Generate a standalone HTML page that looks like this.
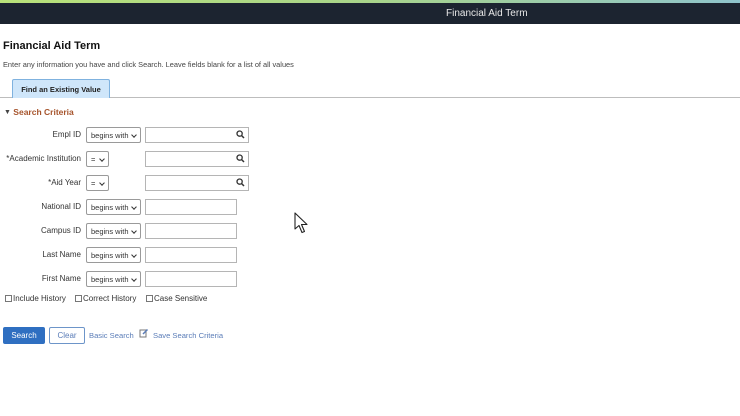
<!DOCTYPE html>
<html><head><meta charset="utf-8"><style>
*{margin:0;padding:0;box-sizing:border-box}
body{width:740px;height:416px;background:#fff;font-family:"Liberation Sans",Arial,sans-serif;position:relative;overflow:hidden;color:#333}
.a{position:absolute;white-space:nowrap}
.hdr{left:0;top:0;width:740px;height:24px;background:#1c2430}
.gl{left:0;top:0;width:740px;height:3px;background:linear-gradient(90deg,#b9e27a,#a8d48a 50%,#8fc4cc)}
.lbl{font-size:8px;color:#333;text-align:right;width:81px;left:0}
.sel{height:16px;border:1px solid #9a9a9a;border-radius:2px;font-size:7.5px;color:#333;padding:3px 0 0 4px;background:#fff}
.sel:after{content:"";position:absolute;right:4px;top:5px;width:3px;height:3px;border-right:1.3px solid #333;border-bottom:1.3px solid #333;transform:rotate(45deg)}
.inp{height:16px;border:1px solid #b5b5b5;background:#fff}
.mg{position:absolute;right:3px;top:2px}
.cb{font-size:8px;color:#333}
.cb i{display:inline-block;width:7px;height:7px;border:1px solid #777;margin-right:1px;vertical-align:-1px}
.lnk{font-size:7.6px;color:#5b7db8}
</style></head><body>
<div class="a hdr"></div><div class="a gl"></div>
<div class="a" style="left:446px;top:8px;font-size:10px;color:#e8e8e8">Financial Aid Term</div>
<div class="a" style="left:3px;top:40px;font-size:11px;font-weight:bold;color:#111">Financial Aid Term</div>
<div class="a" style="left:3px;top:60px;font-size:7.4px;color:#444">Enter any information you have and click Search. Leave fields blank for a list of all values</div>
<div class="a" style="left:0;top:97px;width:740px;height:1px;background:#bdbdbd"></div>
<div class="a" style="left:12px;top:79px;width:98px;height:19px;background:#cfe6fa;border:1px solid #7fb2df;border-bottom:none;border-radius:2px 2px 0 0;font-size:7.5px;font-weight:bold;color:#222;text-align:center;padding-top:5px">Find an Existing Value</div>
<div class="a" style="left:4px;top:107px;font-size:8.5px;font-weight:bold;color:#a6542c"><span style="font-size:7px;color:#444;vertical-align:1px">&#9660;</span> Search Criteria</div>

<div class="a lbl" style="top:130px">Empl ID</div>
<div class="a sel" style="left:86px;top:127px;width:55px">begins with</div>
<div class="a inp" style="left:145px;top:127px;width:104px"><svg class="mg" width="9" height="9" viewBox="0 0 9 9"><circle cx="3.6" cy="3.6" r="2.6" fill="none" stroke="#333" stroke-width="1.3"/><path d="M5.5 5.5L8 8" stroke="#333" stroke-width="1.5"/></svg></div>

<div class="a lbl" style="top:154px">*Academic Institution</div>
<div class="a sel" style="left:86px;top:151px;width:23px">=</div>
<div class="a inp" style="left:145px;top:151px;width:104px"><svg class="mg" width="9" height="9" viewBox="0 0 9 9"><circle cx="3.6" cy="3.6" r="2.6" fill="none" stroke="#333" stroke-width="1.3"/><path d="M5.5 5.5L8 8" stroke="#333" stroke-width="1.5"/></svg></div>

<div class="a lbl" style="top:178px">*Aid Year</div>
<div class="a sel" style="left:86px;top:175px;width:23px">=</div>
<div class="a inp" style="left:145px;top:175px;width:104px"><svg class="mg" width="9" height="9" viewBox="0 0 9 9"><circle cx="3.6" cy="3.6" r="2.6" fill="none" stroke="#333" stroke-width="1.3"/><path d="M5.5 5.5L8 8" stroke="#333" stroke-width="1.5"/></svg></div>

<div class="a lbl" style="top:202px">National ID</div>
<div class="a sel" style="left:86px;top:199px;width:55px">begins with</div>
<div class="a inp" style="left:145px;top:199px;width:92px"></div>

<div class="a lbl" style="top:226px">Campus ID</div>
<div class="a sel" style="left:86px;top:223px;width:55px">begins with</div>
<div class="a inp" style="left:145px;top:223px;width:92px"></div>

<div class="a lbl" style="top:250px">Last Name</div>
<div class="a sel" style="left:86px;top:247px;width:55px">begins with</div>
<div class="a inp" style="left:145px;top:247px;width:92px"></div>

<div class="a lbl" style="top:274px">First Name</div>
<div class="a sel" style="left:86px;top:271px;width:55px">begins with</div>
<div class="a inp" style="left:145px;top:271px;width:92px"></div>

<div class="a cb" style="left:5px;top:294px"><i></i>Include History</div>
<div class="a cb" style="left:75px;top:294px"><i></i>Correct History</div>
<div class="a cb" style="left:146px;top:294px"><i></i>Case Sensitive</div>

<div class="a" style="left:3px;top:327px;width:42px;height:17px;background:#2f6fc1;border-radius:2px;color:#fff;font-size:8px;text-align:center;padding-top:4px">Search</div>
<div class="a" style="left:49px;top:327px;width:36px;height:17px;border:1px solid #6d95c9;border-radius:2px;color:#5b7db8;font-size:8px;text-align:center;padding-top:3px">Clear</div>
<div class="a lnk" style="left:89px;top:331px">Basic Search</div>
<svg class="a" style="left:139px;top:328px" width="10" height="10" viewBox="0 0 10 10"><rect x="1" y="2" width="6" height="7" fill="#fff" stroke="#777"/><path d="M4 6L8.5 1.5" stroke="#5b7db8" stroke-width="1.5"/></svg>
<div class="a lnk" style="left:153px;top:331px">Save Search Criteria</div>

<svg class="a" style="left:294px;top:212px" width="16" height="23" viewBox="0 0 16 23"><path d="M1 1L1 17L5 13.5L8 20.5L10.5 19.5L7.5 12.5L13 12.5Z" fill="#fff" stroke="#222" stroke-width="1.1" stroke-linejoin="round"/></svg>
</body></html>
